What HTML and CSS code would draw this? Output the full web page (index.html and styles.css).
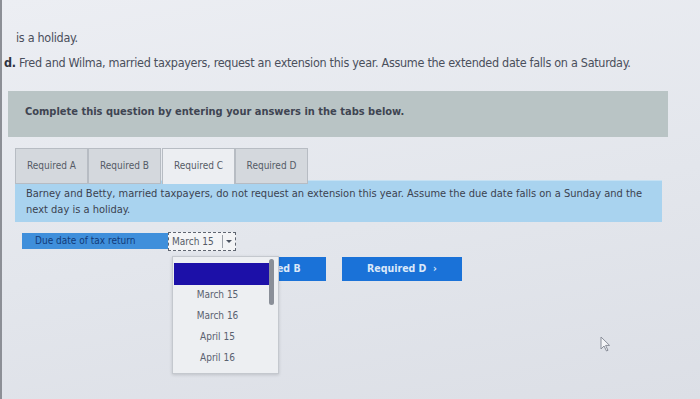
FILE: index.html
```html
<!DOCTYPE html>
<html lang="en">
<head>
    <meta charset="UTF-8">
    <title>Required C</title>
    <link rel="stylesheet" href="styles.css">
</head>
<body>
    <div class="screen">
        <p class="prev-text">is a holiday.</p>
        <p class="question"><b>d.</b> Fred and Wilma, married taxpayers, request an extension this year. Assume the extended date falls on a Saturday.</p>

        <div class="notice">Complete this question by entering your answers in the tabs below.</div>

        <div class="tabs">
            <div class="tab">Required A</div>
            <div class="tab">Required B</div>
            <div class="tab active">Required C</div>
            <div class="tab">Required D</div>
        </div>

        <div class="panel">
            Barney and Betty, married taxpayers, do not request an extension this year. Assume the due date falls on a Sunday and the next day is a holiday.
        </div>

        <div class="answer-row">
            <div class="answer-label">Due date of tax return</div>
            <div class="select">
                <span>March 15</span>
                <span class="select-arrow"></span>
                <!-- open list of choices -->
                <div class="dropdown">
                    <div class="dropdown-selected"></div>
                    <div class="dropdown-item">March 15</div>
                    <div class="dropdown-item">March 16</div>
                    <div class="dropdown-item">April 15</div>
                    <div class="dropdown-item">April 16</div>
                    <div class="dropdown-scroll"></div>
                </div>
            </div>
        </div>

        <div class="nav-buttons">
            <div class="nav-btn">&lsaquo;&nbsp; Required B</div>
            <div class="nav-btn">Required D &nbsp;&rsaquo;</div>
        </div>

        <svg class="cursor" width="11" height="16" viewBox="0 0 11 16">
            <path d="M1 1 L1 13 L4 10 L6.5 15 L8 14.3 L5.6 9.4 L9.6 9.4 Z" fill="#f4f5f8" stroke="#8a8f9a" stroke-width="1"/>
        </svg>
    </div>
</body>
</html>
```

FILE: styles.css
```css
* {
    margin: 0;
    padding: 0;
    box-sizing: border-box;
}

body {
    background: #e4e7ed;
    font-family: "DejaVu Sans Condensed", sans-serif;
    overflow: hidden;
}

.screen {
    position: relative;
    width: 700px;
    height: 399px;
    border-left: 2px solid #8c8f96;
    background: linear-gradient(170deg, #eceef3 0%, #e3e6ec 55%, #dcdfe6 100%);
}

.prev-text {
    padding: 30px 0 0 14px;
    font-size: 12.5px;
    letter-spacing: -0.3px;
    color: #4a4f5c;
}

.question {
    padding: 10px 0 0 2px;
    font-size: 12.5px;
    letter-spacing: -0.3px;
    white-space: nowrap;
    color: #4a4f5c;
}

.question b {
    color: #2e3340;
}

.notice {
    margin: 21px 32px 0 6px;
    height: 46px;
    padding: 14px 0 0 17px;
    background: #b9c4c5;
    font-weight: bold;
    font-size: 11px;
    color: #3f4552;
}

.tabs {
    display: flex;
    margin: 11px 0 0 13px;
    height: 36px;
}

.tab {
    width: 73px;
    padding-top: 11px;
    text-align: center;
    background: #d4d8dd;
    border: 1px solid #b7bcc3;
    font-size: 10px;
    color: #555b66;
}

.tab.active {
    background: #eceef2;
    border-bottom: none;
    margin-left: 1px;
}

.panel {
    margin: -4px 0 0 13px;
    width: 647px;
    height: 42px;
    padding: 5px 8px 0 11px;
    background: #a9d3ef;
    border-top: 1px solid #c6e1f3;
    font-size: 11px;
    line-height: 16px;
    color: #3b4250;
}

.answer-row {
    display: flex;
    align-items: center;
    margin: 9px 0 0 20px;
    height: 20px;
}

.answer-label {
    width: 146px;
    height: 16px;
    padding: 2px 0 0 13px;
    background: #3f8fdb;
    font-size: 10px;
    color: #123a78;
}

.select {
    position: relative;
    display: flex;
    align-items: center;
    width: 68px;
    height: 19px;
    padding-left: 3px;
    background: #f3f4f6;
    border: 1px dashed #5f6570;
    font-size: 10px;
    color: #555b66;
}

.select-arrow {
    margin-left: 8px;
    width: 11px;
    height: 13px;
    border-left: 1px solid #9aa0a8;
    position: relative;
}

.select-arrow::after {
    content: "";
    position: absolute;
    left: 3px;
    top: 5px;
    border-left: 3px solid transparent;
    border-right: 3px solid transparent;
    border-top: 3px solid #4b5260;
}

.dropdown {
    position: absolute;
    top: 23px;
    left: 3px;
    width: 107px;
    height: 118px;
    padding: 6px 0 0 1px;
    background: #edeff2;
    border: 1px solid #c4c8ce;
    box-shadow: 0 1px 3px rgba(0, 0, 0, 0.15);
    z-index: 2;
}

.dropdown-selected {
    width: 95px;
    height: 22px;
    background: #1c10a8;
}

.dropdown-item {
    width: 95px;
    height: 21px;
    padding: 4px 8px 0 0;
    text-align: center;
    font-size: 10px;
    color: #5a6170;
}

.dropdown-scroll {
    position: absolute;
    top: 2px;
    left: 96px;
    width: 5px;
    height: 46px;
    border-radius: 3px;
    background: #8a8f98;
}

.nav-buttons {
    display: flex;
    gap: 16px;
    margin: 6px 0 0 204px;
}

.nav-btn {
    width: 120px;
    height: 24px;
    padding-top: 5px;
    text-align: center;
    background: #1a72d8;
    font-weight: bold;
    font-size: 10.5px;
    color: #dbe8f8;
}

.cursor {
    position: absolute;
    left: 598px;
    top: 336px;
}
```
